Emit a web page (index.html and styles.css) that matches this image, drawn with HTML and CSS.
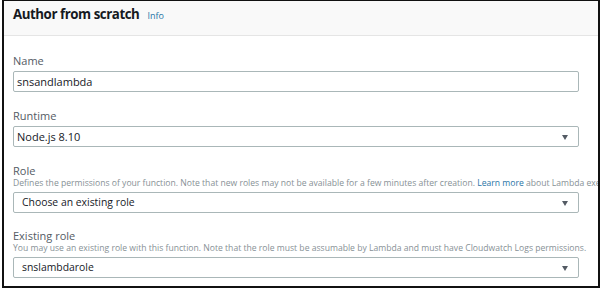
FILE: index.html
```html
<!DOCTYPE html>
<html lang="en">
<head>
<meta charset="UTF-8">
<title>Author from scratch</title>
<link rel="stylesheet" href="styles.css">
</head>
<body>
<div class="panel">
    <div class="panel-head">
        <h2>Author from scratch</h2>
        <a class="info" href="#">Info</a>
    </div>
    <div class="panel-body">
        <div class="field">
            <label>Name</label>
            <div class="input">snsandlambda</div>
        </div>
        <div class="field">
            <label>Runtime</label>
            <div class="input select">Node.js 8.10<span class="arrow"></span></div>
        </div>
        <div class="field">
            <label>Role</label>
            <div class="desc">Defines the permissions of your function. Note that new roles may not be available for a few minutes after creation. <a href="#">Learn more</a> about Lambda execution roles.</div>
            <div class="input select wide">Choose an existing role<span class="arrow"></span></div>
        </div>
        <div class="field">
            <label>Existing role</label>
            <div class="desc">You may use an existing role with this function. Note that the role must be assumable by Lambda and must have Cloudwatch Logs permissions.</div>
            <div class="input select wide">snslambdarole<span class="arrow"></span></div>
        </div>
    </div>
</div>
</body>
</html>
```

FILE: styles.css
```css
/* page */
body {
    margin: 0;
    background: #fff;
    font-family: "Open Sans", "Liberation Sans", sans-serif;
    color: #16191f;
}

.panel {
    margin-left: 2px;
    width: 594px;
    height: 285px;
    border: 2px solid #111;
    border-top-width: 1px;
    overflow: hidden;
}

/* header */
.panel-head {
    display: flex;
    align-items: baseline;
    gap: 8px;
    height: 34px;
    padding: 0 9px;
    background: #f9f9f9;
    border-bottom: 1px solid #e5e5e5;
}
.panel-head h2 {
    margin: 0;
    font-size: 13.3px;
    font-weight: bold;
    letter-spacing: -0.45px;
    line-height: 27px;
    color: #16191f;
}
.info {
    font-size: 9px;
    color: #2874a6;
    text-decoration: none;
}

/* form */
.panel-body {
    padding: 18px 19px 0 9px;
}
.field {
    margin-bottom: 17px;
}
.field:nth-child(3) {
    margin-bottom: 16px;
}
.field label {
    display: block;
    font-size: 11px;
    line-height: 14px;
    color: #545b64;
    margin-bottom: 3px;
}
.desc {
    font-size: 8.6px;
    line-height: 12px;
    color: #879196;
    white-space: nowrap;
    margin-top: -4px;
    margin-bottom: 3px;
}
.desc a {
    color: #2874a6;
    text-decoration: none;
}
.input {
    position: relative;
    height: 19px;
    padding-left: 3px;
    border: 1px solid #aab7b8;
    border-radius: 2px;
    font-size: 11px;
    line-height: 19px;
    color: #16191f;
}
.input.wide {
    padding-left: 8px;
    font-size: 10.4px;
}
.arrow {
    position: absolute;
    right: 10px;
    top: 8px;
    width: 0;
    height: 0;
    border-left: 3.5px solid transparent;
    border-right: 3.5px solid transparent;
    border-top: 5px solid #545b64;
}
```
